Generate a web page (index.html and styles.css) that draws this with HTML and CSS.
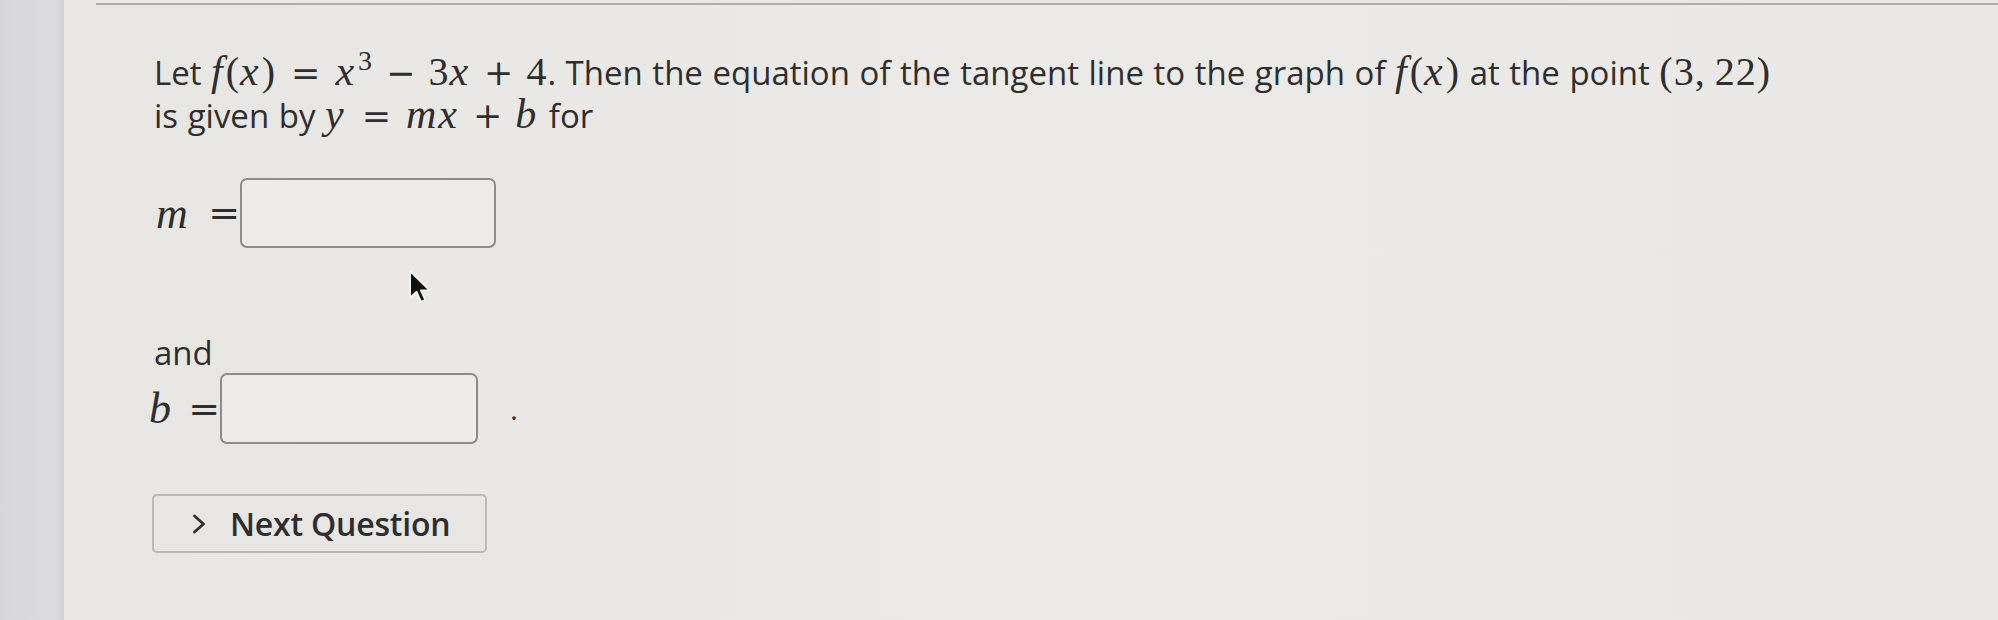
FILE: index.html
```html
<!DOCTYPE html>
<html>
<head>
<meta charset="utf-8">
<link rel="stylesheet" href="styles.css">
</head>
<body>
<div class="screen">
  <div class="side-strip"></div>
  <div class="panel">
    <p class="question">Let <span class="mi">f</span><span class="mn">(</span><span class="mi">x</span><span class="mn">)</span><span class="mo rel">=</span><span class="mi">x</span><sup class="mn">3</sup><span class="mo">−</span><span class="mn">3</span><span class="mi">x</span><span class="mo">+</span><span class="mn">4</span>. Then the equation of the tangent line to the graph of <span class="mi">f</span><span class="mn">(</span><span class="mi">x</span><span class="mn">)</span> at the point <span class="mn">(3,&thinsp;22)</span><br>is given by <span class="mi">y</span><span class="mo rel">=</span><span class="mi">mx</span><span class="mo">+</span><span class="mi">b</span> for</p>

    <div class="answer-row row-m">
      <span class="label"><span class="mi">m</span><span class="mo rel">=</span></span>
      <span class="input-box box-m"></span>
    </div>

    <p class="and">and</p>

    <div class="answer-row row-b">
      <span class="label"><span class="mi">b</span><span class="mo rel">=</span></span>
      <span class="input-box box-b"></span>
      <span class="period">.</span>
    </div>

    <button class="next-btn"><svg class="chev" width="14" height="22" viewBox="0 0 14 22"><path d="M2.5 3 L11.5 11 L2.5 19" fill="none" stroke="#2f2f32" stroke-width="2.8" stroke-linecap="round" stroke-linejoin="round"/></svg>Next Question</button>

    <svg class="cursor" width="28" height="40" viewBox="0 0 28 40">
      <path d="M3 3 L3 30 L9.5 24 L14 34 L18.5 32 L14 22.5 L23 22.5 Z" fill="#111" stroke="#f2f2f2" stroke-width="2" stroke-linejoin="round"/>
    </svg>
  </div>
</div>
</body>
</html>
```

FILE: styles.css
```css
html, body {
  margin: 0;
  padding: 0;
  background: #e9e8e4;
}

.screen {
  display: flex;
  width: 1998px;
  height: 620px;
  overflow: hidden;
  background: #e9e8e4;
}

.side-strip {
  width: 64px;
  flex: none;
  background: linear-gradient(90deg, #d7d7da 0%, #dcdcdf 85%, #cfcfd2 100%);
}

.panel {
  position: relative;
  flex: 1;
  margin-left: 32px;
  margin-top: 3px;
  border-top: 2px solid #aeaeae;
  padding-left: 58px;
  padding-top: 46px;
  color: #2e2e31;
  font-family: "Open Sans", "DejaVu Sans", sans-serif;
  font-size: 33px;
  font-weight: 500;
  background: linear-gradient(90deg, #e7e6e2 0%, #ebeae6 50%, #e9e8e4 100%);
}

.question {
  margin: 0;
  line-height: 41px;
  word-spacing: 1px;
}

.mi {
  font-family: "Liberation Serif", "DejaVu Serif", serif;
  font-style: italic;
  font-weight: 400;
  font-size: 42px;
  letter-spacing: 2px;
  padding-right: 1px;
}

.mn {
  font-family: "Liberation Serif", "DejaVu Serif", serif;
  font-style: normal;
  font-weight: 400;
  font-size: 40px;
  letter-spacing: 1px;
}

.mo {
  font-family: "DejaVu Serif", "Liberation Serif", serif;
  font-style: normal;
  font-weight: 400;
  font-size: 35px;
  letter-spacing: 0;
  margin: 0 13px;
}

.mo.rel {
  margin: 0 15px;
}

sup.mn {
  font-size: 28px;
  vertical-align: 15px;
  line-height: 0;
  margin-left: 1px;
}

.answer-row {
  display: flex;
  align-items: center;
}

.row-m {
  margin-top: 41px;
}

.label {
  white-space: nowrap;
  display: flex;
  align-items: center;
}

.label .mi {
  font-size: 44px;
}

.label .mo.rel {
  font-size: 38px;
  margin: 0 0 0 auto;
}

.row-m .label {
  width: 84px;
  padding-left: 2px;
}

.row-b .label {
  width: 71px;
  margin-left: -5px;
}

.input-box {
  display: block;
  border: 2px solid #8c8c8c;
  border-radius: 7px;
  background: #ecebe8;
  box-sizing: border-box;
}

.box-m {
  width: 256px;
  height: 70px;
}

.box-b {
  width: 258px;
  height: 71px;
}

.period {
  margin-left: 32px;
  font-size: 30px;
}

.and {
  margin: 84px 0 0 0;
  line-height: 41px;
}

.next-btn {
  display: flex;
  align-items: center;
  margin-top: 50px;
  margin-left: -2px;
  width: 335px;
  height: 59px;
  padding: 0 0 0 38px;
  border: 2px solid #b9b9b9;
  border-radius: 5px;
  background: #e7e6e3;
  color: #2e2e31;
  font-family: "Open Sans", "DejaVu Sans", sans-serif;
  font-size: 32px;
  font-weight: 600;
  letter-spacing: -0.2px;
}

.chev {
  margin-right: 24px;
  flex: none;
}

.cursor {
  position: absolute;
  left: 311px;
  top: 263px;
}
```
